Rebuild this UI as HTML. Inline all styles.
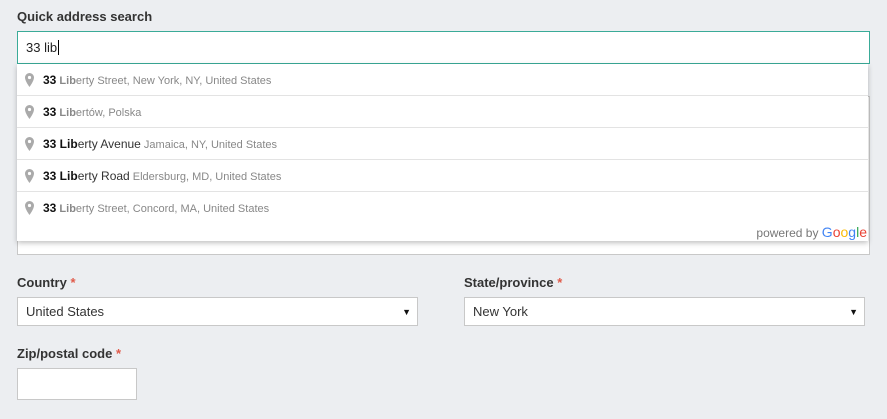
<!DOCTYPE html>
<html><head><style>
body{margin:0;width:887px;height:419px;background:#eceef1;font-family:"Liberation Sans",sans-serif;position:relative;overflow:hidden;color:#333}
.a{position:absolute}
.lbl{font-weight:bold;font-size:13px;color:#333}
.req{color:#e05a4a}
.box{background:#fff;border:1px solid #c8c8c8;box-sizing:border-box}
.row{position:absolute;left:0;right:0;height:32px;border-bottom:1px solid #e3e3e3;font-size:11px;color:#888;line-height:32px;padding-left:26px;box-sizing:border-box}
.row b{color:#111;font-size:12px}
.row i{font-style:normal;color:#888;font-weight:bold}
.row span.m{color:#333;font-size:12px}
.pin{position:absolute;left:8px;top:9px}
.sel{font-size:13px;line-height:28px;padding-left:8px}
.arr{position:absolute;right:6px;top:0;font-size:9px;color:#111}
</style></head><body>
<div class="a lbl" style="left:17px;top:9px">Quick address search</div>
<div class="a box" style="left:17px;top:96px;width:853px;height:159px"></div>
<div class="a" style="left:17px;top:31px;width:853px;height:33px;background:#fff;border:1px solid #3aab98;border-color:#3aab98;box-sizing:border-box;font-size:13px;line-height:31px;padding-left:8px;color:#222">33 lib<span style="border-left:1px solid #000;margin-left:1px"></span></div>
<div class="a" style="left:17px;top:64px;width:851px;height:177px;background:#fff;box-shadow:0 2px 5px rgba(0,0,0,.25)">
<div class="row" style="top:0"><svg class="pin" width="9" height="14" viewBox="0 0 9 14"><path d="M4.5 0A4.5 4.5 0 0 0 0 4.5C0 8 4.5 14 4.5 14S9 8 9 4.5A4.5 4.5 0 0 0 4.5 0z" fill="#aaa"/><circle cx="4.5" cy="4.5" r="1.6" fill="#fff"/></svg><b>33</b> <i>Lib</i>erty Street, New York, NY, United States</div>
<div class="row" style="top:32px"><svg class="pin" width="9" height="14" viewBox="0 0 9 14"><path d="M4.5 0A4.5 4.5 0 0 0 0 4.5C0 8 4.5 14 4.5 14S9 8 9 4.5A4.5 4.5 0 0 0 4.5 0z" fill="#aaa"/><circle cx="4.5" cy="4.5" r="1.6" fill="#fff"/></svg><b>33</b> <i>Lib</i>ertów, Polska</div>
<div class="row" style="top:64px"><svg class="pin" width="9" height="14" viewBox="0 0 9 14"><path d="M4.5 0A4.5 4.5 0 0 0 0 4.5C0 8 4.5 14 4.5 14S9 8 9 4.5A4.5 4.5 0 0 0 4.5 0z" fill="#aaa"/><circle cx="4.5" cy="4.5" r="1.6" fill="#fff"/></svg><span class="m"><b>33 Lib</b>erty Avenue</span> Jamaica, NY, United States</div>
<div class="row" style="top:96px"><svg class="pin" width="9" height="14" viewBox="0 0 9 14"><path d="M4.5 0A4.5 4.5 0 0 0 0 4.5C0 8 4.5 14 4.5 14S9 8 9 4.5A4.5 4.5 0 0 0 4.5 0z" fill="#aaa"/><circle cx="4.5" cy="4.5" r="1.6" fill="#fff"/></svg><span class="m"><b>33 Lib</b>erty Road</span> Eldersburg, MD, United States</div>
<div class="row" style="top:128px;border-bottom:none"><svg class="pin" width="9" height="14" viewBox="0 0 9 14"><path d="M4.5 0A4.5 4.5 0 0 0 0 4.5C0 8 4.5 14 4.5 14S9 8 9 4.5A4.5 4.5 0 0 0 4.5 0z" fill="#aaa"/><circle cx="4.5" cy="4.5" r="1.6" fill="#fff"/></svg><b>33</b> <i>Lib</i>erty Street, Concord, MA, United States</div>
<div class="a" style="right:1px;top:160px;font-size:12px;color:#777">powered by <span style="font-size:14px"><span style="color:#4285f4">G</span><span style="color:#ea4335">o</span><span style="color:#fbbc05">o</span><span style="color:#4285f4">g</span><span style="color:#34a853">l</span><span style="color:#ea4335">e</span></span></div>
</div>
<div class="a lbl" style="left:17px;top:275px">Country <span class="req">*</span></div>
<div class="a box sel" style="left:17px;top:297px;width:401px;height:29px">United States<span class="arr">▼</span></div>
<div class="a lbl" style="left:464px;top:275px">State/province <span class="req">*</span></div>
<div class="a box sel" style="left:464px;top:297px;width:401px;height:29px">New York<span class="arr">▼</span></div>
<div class="a lbl" style="left:17px;top:346px">Zip/postal code <span class="req">*</span></div>
<div class="a box" style="left:17px;top:368px;width:120px;height:32px"></div>
</body></html>
